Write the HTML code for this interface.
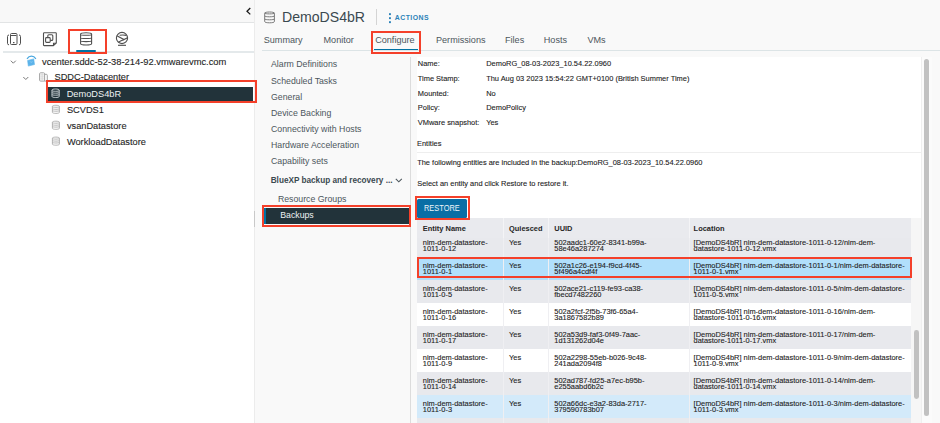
<!DOCTYPE html>
<html><head><meta charset="utf-8"><title>DemoDS4bR - Configure - Backups</title>
<style>
html,body{margin:0;padding:0;width:940px;height:423px;overflow:hidden;background:#fff}
body{position:relative;font-family:"Liberation Sans",sans-serif}
.t{position:absolute;white-space:nowrap}
.r{position:absolute}
</style></head><body>
<div class="r" style="left:0px;top:0px;width:253.5px;height:423px;background:#fff"></div>
<div class="r" style="left:0px;top:0px;width:253.5px;height:22px;background:#f8f8f8"></div>
<div class="r" style="left:0px;top:22px;width:253.5px;height:1px;background:#e2e4e5"></div>
<div class="r" style="left:3px;top:51.2px;width:250.5px;height:1.6px;background:#e4e9eb"></div>
<div class="r" style="left:253.5px;top:0px;width:1.5px;height:423px;background:#ececec"></div>
<div class="r" style="left:253.6px;top:211px;width:1.4px;height:16px;background:#c9c9c9"></div>
<svg class="r" style="left:245px;top:7px" width="8" height="9" viewBox="0 0 8 9"><path d="M5.3 1 L2 4.2 L5.3 7.4" fill="none" stroke="#1a1a1a" stroke-width="1.3"/></svg>
<div class="r" style="left:76px;top:50.2px;width:20px;height:2px;background:#0072a3;border-radius:1px"></div>
<div class="t" style="left:42.00px;top:58px;font-size:9.35px;line-height:9.35px;color:#262626;font-weight:400;-webkit-text-stroke:0.12px #262626">vcenter.sddc-52-38-214-92.vmwarevmc.com</div>
<div class="t" style="left:54.50px;top:73px;font-size:9.25px;line-height:9.25px;color:#262626;font-weight:400;-webkit-text-stroke:0.12px #262626">SDDC-Datacenter</div>
<div class="r" style="left:48.1px;top:86.6px;width:205px;height:14.9px;background:#22333a"></div>
<div class="t" style="left:66.70px;top:90px;font-size:9.25px;line-height:9.25px;color:#eef2f3;font-weight:400;">DemoDS4bR</div>
<div class="t" style="left:66.90px;top:106px;font-size:9.25px;line-height:9.25px;color:#262626;font-weight:400;-webkit-text-stroke:0.12px #262626">SCVDS1</div>
<div class="t" style="left:66.90px;top:122px;font-size:9.25px;line-height:9.25px;color:#262626;font-weight:400;-webkit-text-stroke:0.12px #262626">vsanDatastore</div>
<div class="t" style="left:66.90px;top:138px;font-size:9.25px;line-height:9.25px;color:#262626;font-weight:400;-webkit-text-stroke:0.12px #262626">WorkloadDatastore</div>
<div class="r" style="left:255px;top:0px;width:685px;height:423px;background:#f9f9f9"></div>
<div class="t" style="left:282.00px;top:10px;font-size:14.1px;line-height:14.1px;color:#3b4950;font-weight:400;">DemoDS4bR</div>
<div class="r" style="left:376px;top:9px;width:1px;height:16px;background:#d4d4d4"></div>
<svg class="r" style="left:388px;top:13px" width="4" height="12"><rect x="1" y="0.2" width="1.9" height="1.9" fill="#2b82b8"/><rect x="1" y="4.2" width="1.9" height="1.9" fill="#2b82b8"/><rect x="1" y="8.2" width="1.9" height="1.9" fill="#2b82b8"/></svg>
<div class="t" style="left:394.80px;top:15px;font-size:6.9px;line-height:6.9px;color:#2b82b8;font-weight:700;letter-spacing:0.45px">ACTIONS</div>
<div class="t" style="left:263.70px;top:36px;font-size:9.1px;line-height:9.1px;color:#4c565c;font-weight:400;">Summary</div>
<div class="t" style="left:323.50px;top:36px;font-size:9.1px;line-height:9.1px;color:#4c565c;font-weight:400;">Monitor</div>
<div class="t" style="left:375.20px;top:36px;font-size:9.1px;line-height:9.1px;color:#4c565c;font-weight:400;">Configure</div>
<div class="t" style="left:436.00px;top:36px;font-size:9.1px;line-height:9.1px;color:#4c565c;font-weight:400;">Permissions</div>
<div class="t" style="left:505.00px;top:36px;font-size:9.1px;line-height:9.1px;color:#4c565c;font-weight:400;">Files</div>
<div class="t" style="left:543.80px;top:36px;font-size:9.1px;line-height:9.1px;color:#4c565c;font-weight:400;">Hosts</div>
<div class="t" style="left:587.40px;top:36px;font-size:9.1px;line-height:9.1px;color:#4c565c;font-weight:400;">VMs</div>
<div class="r" style="left:261.5px;top:49.8px;width:678.5px;height:1.2px;background:#dce4e6"></div>
<div class="r" style="left:373.7px;top:48.8px;width:44px;height:1.6px;background:#0072a3"></div>
<div class="t" style="left:271.00px;top:60px;font-size:8.75px;line-height:8.75px;color:#4c565c;font-weight:400;">Alarm Definitions</div>
<div class="t" style="left:271.00px;top:77px;font-size:8.75px;line-height:8.75px;color:#4c565c;font-weight:400;">Scheduled Tasks</div>
<div class="t" style="left:271.00px;top:93px;font-size:8.75px;line-height:8.75px;color:#4c565c;font-weight:400;">General</div>
<div class="t" style="left:271.00px;top:109px;font-size:8.75px;line-height:8.75px;color:#4c565c;font-weight:400;">Device Backing</div>
<div class="t" style="left:271.00px;top:125px;font-size:8.75px;line-height:8.75px;color:#4c565c;font-weight:400;">Connectivity with Hosts</div>
<div class="t" style="left:271.00px;top:141px;font-size:8.75px;line-height:8.75px;color:#4c565c;font-weight:400;">Hardware Acceleration</div>
<div class="t" style="left:271.00px;top:157px;font-size:8.75px;line-height:8.75px;color:#4c565c;font-weight:400;">Capability sets</div>
<div class="t" style="left:270.70px;top:177px;font-size:8.2px;line-height:8.2px;color:#3b4950;font-weight:700;">BlueXP backup and recovery ...</div>
<svg class="r" style="left:395px;top:178px" width="8" height="6"><path d="M0.8 0.8 L3.8 3.8 L6.8 0.8" fill="none" stroke="#4c565c" stroke-width="1.1"/></svg>
<div class="t" style="left:277.90px;top:195px;font-size:8.75px;line-height:8.75px;color:#4c565c;font-weight:400;">Resource Groups</div>
<div class="r" style="left:264px;top:208.4px;width:144.5px;height:15.7px;background:#22333a"></div>
<div class="r" style="left:264px;top:208.4px;width:1.8px;height:15.7px;background:#0072a3"></div>
<div class="t" style="left:280.20px;top:211px;font-size:8.75px;line-height:8.75px;color:#eef2f3;font-weight:400;">Backups</div>
<div class="r" style="left:410px;top:57px;width:1px;height:366px;background:#dcdcdc"></div>
<div class="r" style="left:416.6px;top:56.7px;width:504.8px;height:366.3px;background:#fff"></div>
<div class="t" style="left:417.80px;top:60px;font-size:7.45px;line-height:7.45px;color:#222;font-weight:400;-webkit-text-stroke:0.1px #222">Name:</div>
<div class="t" style="left:486.20px;top:60px;font-size:7.45px;line-height:7.45px;color:#222;font-weight:400;-webkit-text-stroke:0.1px #222">DemoRG_08-03-2023_10.54.22.0960</div>
<div class="t" style="left:417.80px;top:75px;font-size:7.45px;line-height:7.45px;color:#222;font-weight:400;-webkit-text-stroke:0.1px #222">Time Stamp:</div>
<div class="t" style="left:486.20px;top:75px;font-size:7.45px;line-height:7.45px;color:#222;font-weight:400;-webkit-text-stroke:0.1px #222">Thu Aug 03 2023 15:54:22 GMT+0100 (British Summer Time)</div>
<div class="t" style="left:417.80px;top:90px;font-size:7.45px;line-height:7.45px;color:#222;font-weight:400;-webkit-text-stroke:0.1px #222">Mounted:</div>
<div class="t" style="left:486.20px;top:90px;font-size:7.45px;line-height:7.45px;color:#222;font-weight:400;-webkit-text-stroke:0.1px #222">No</div>
<div class="t" style="left:417.80px;top:104px;font-size:7.45px;line-height:7.45px;color:#222;font-weight:400;-webkit-text-stroke:0.1px #222">Policy:</div>
<div class="t" style="left:486.20px;top:104px;font-size:7.45px;line-height:7.45px;color:#222;font-weight:400;-webkit-text-stroke:0.1px #222">DemoPolicy</div>
<div class="t" style="left:417.80px;top:119px;font-size:7.45px;line-height:7.45px;color:#222;font-weight:400;-webkit-text-stroke:0.1px #222">VMware snapshot:</div>
<div class="t" style="left:486.20px;top:119px;font-size:7.45px;line-height:7.45px;color:#222;font-weight:400;-webkit-text-stroke:0.1px #222">Yes</div>
<div class="t" style="left:417.00px;top:140px;font-size:7.45px;line-height:7.45px;color:#222;font-weight:400;-webkit-text-stroke:0.1px #222">Entities</div>
<div class="r" style="left:416.6px;top:152.3px;width:504.8px;height:1px;background:#eeeeee"></div>
<div class="t" style="left:417.20px;top:159px;font-size:7.45px;line-height:7.45px;color:#222;font-weight:400;-webkit-text-stroke:0.1px #222">The following entities are included in the backup:DemoRG_08-03-2023_10.54.22.0960</div>
<div class="t" style="left:417.20px;top:180px;font-size:7.45px;line-height:7.45px;color:#222;font-weight:400;-webkit-text-stroke:0.1px #222">Select an entity and click Restore to restore it.</div>
<div class="r" style="left:416.7px;top:198.8px;width:50px;height:18.8px;background:#096ea5;border-radius:1.5px"></div>
<div class="t" style="left:423.90px;top:205px;font-size:8.2px;line-height:8.2px;color:#eef5f9;font-weight:400;transform:scaleX(0.905);transform-origin:0 0">RESTORE</div>
<div class="r" style="left:0;top:238.3px;width:940px;height:184.7px;overflow:hidden"><div class="r" style="left:0;top:-238.3px;width:940px;height:700px">
<div class="r" style="left:417.2px;top:233.5px;width:494.2px;height:23.0px;background:#e8e9ed"></div>
<div class="r" style="left:502.8px;top:233.5px;width:1px;height:23.0px;background:#efeff2"></div>
<div class="r" style="left:548.0px;top:233.5px;width:1px;height:23.0px;background:#efeff2"></div>
<div class="r" style="left:688.5px;top:233.5px;width:1px;height:23.0px;background:#efeff2"></div>
<div class="t" style="left:422.80px;top:240px;font-size:7.45px;line-height:6.2px;color:#222;font-weight:400;-webkit-text-stroke:0.1px #222">nim-dem-datastore-<br>1011-0-12</div>
<div class="t" style="left:509.00px;top:240px;font-size:7.45px;line-height:6.2px;color:#222;font-weight:400;-webkit-text-stroke:0.1px #222">Yes</div>
<div class="t" style="left:554.30px;top:240px;font-size:7.45px;line-height:6.2px;color:#222;font-weight:400;-webkit-text-stroke:0.1px #222">502aadc1-60e2-8341-b99a-<br>58e46a287274</div>
<div class="t" style="left:693.60px;top:240px;font-size:7.45px;line-height:6.2px;color:#222;font-weight:400;-webkit-text-stroke:0.1px #222">[DemoDS4bR] nim-dem-datastore-1011-0-12/nim-dem-<br>datastore-1011-0-12.vmx</div>
<div class="r" style="left:417.2px;top:256.5px;width:494.2px;height:23.0px;background:#b1dffb"></div>
<div class="r" style="left:502.8px;top:256.5px;width:1px;height:23.0px;background:#efeff2"></div>
<div class="r" style="left:548.0px;top:256.5px;width:1px;height:23.0px;background:#efeff2"></div>
<div class="r" style="left:688.5px;top:256.5px;width:1px;height:23.0px;background:#efeff2"></div>
<div class="t" style="left:422.80px;top:263px;font-size:7.45px;line-height:6.2px;color:#222;font-weight:400;-webkit-text-stroke:0.1px #222">nim-dem-datastore-<br>1011-0-1</div>
<div class="t" style="left:509.00px;top:263px;font-size:7.45px;line-height:6.2px;color:#222;font-weight:400;-webkit-text-stroke:0.1px #222">Yes</div>
<div class="t" style="left:554.30px;top:263px;font-size:7.45px;line-height:6.2px;color:#222;font-weight:400;-webkit-text-stroke:0.1px #222">502a1c26-e194-f9cd-4f45-<br>5f496a4cdf4f</div>
<div class="t" style="left:693.60px;top:263px;font-size:7.45px;line-height:6.2px;color:#222;font-weight:400;-webkit-text-stroke:0.1px #222">[DemoDS4bR] nim-dem-datastore-1011-0-1/nim-dem-datastore-<br>1011-0-1.vmx</div>
<div class="r" style="left:417.2px;top:279.5px;width:494.2px;height:23.0px;background:#e8e9ed"></div>
<div class="r" style="left:502.8px;top:279.5px;width:1px;height:23.0px;background:#efeff2"></div>
<div class="r" style="left:548.0px;top:279.5px;width:1px;height:23.0px;background:#efeff2"></div>
<div class="r" style="left:688.5px;top:279.5px;width:1px;height:23.0px;background:#efeff2"></div>
<div class="t" style="left:422.80px;top:286px;font-size:7.45px;line-height:6.2px;color:#222;font-weight:400;-webkit-text-stroke:0.1px #222">nim-dem-datastore-<br>1011-0-5</div>
<div class="t" style="left:509.00px;top:286px;font-size:7.45px;line-height:6.2px;color:#222;font-weight:400;-webkit-text-stroke:0.1px #222">Yes</div>
<div class="t" style="left:554.30px;top:286px;font-size:7.45px;line-height:6.2px;color:#222;font-weight:400;-webkit-text-stroke:0.1px #222">502ace21-c119-fe93-ca38-<br>fbecd7482260</div>
<div class="t" style="left:693.60px;top:286px;font-size:7.45px;line-height:6.2px;color:#222;font-weight:400;-webkit-text-stroke:0.1px #222">[DemoDS4bR] nim-dem-datastore-1011-0-5/nim-dem-datastore-<br>1011-0-5.vmx</div>
<div class="r" style="left:417.2px;top:302.5px;width:494.2px;height:23.0px;background:#ffffff"></div>
<div class="r" style="left:502.8px;top:302.5px;width:1px;height:23.0px;background:#efeff2"></div>
<div class="r" style="left:548.0px;top:302.5px;width:1px;height:23.0px;background:#efeff2"></div>
<div class="r" style="left:688.5px;top:302.5px;width:1px;height:23.0px;background:#efeff2"></div>
<div class="t" style="left:422.80px;top:309px;font-size:7.45px;line-height:6.2px;color:#222;font-weight:400;-webkit-text-stroke:0.1px #222">nim-dem-datastore-<br>1011-0-16</div>
<div class="t" style="left:509.00px;top:309px;font-size:7.45px;line-height:6.2px;color:#222;font-weight:400;-webkit-text-stroke:0.1px #222">Yes</div>
<div class="t" style="left:554.30px;top:309px;font-size:7.45px;line-height:6.2px;color:#222;font-weight:400;-webkit-text-stroke:0.1px #222">502a2fcf-2f5b-73f6-65a4-<br>3a1867582b89</div>
<div class="t" style="left:693.60px;top:309px;font-size:7.45px;line-height:6.2px;color:#222;font-weight:400;-webkit-text-stroke:0.1px #222">[DemoDS4bR] nim-dem-datastore-1011-0-16/nim-dem-<br>datastore-1011-0-16.vmx</div>
<div class="r" style="left:417.2px;top:325.5px;width:494.2px;height:23.0px;background:#e8e9ed"></div>
<div class="r" style="left:502.8px;top:325.5px;width:1px;height:23.0px;background:#efeff2"></div>
<div class="r" style="left:548.0px;top:325.5px;width:1px;height:23.0px;background:#efeff2"></div>
<div class="r" style="left:688.5px;top:325.5px;width:1px;height:23.0px;background:#efeff2"></div>
<div class="t" style="left:422.80px;top:332px;font-size:7.45px;line-height:6.2px;color:#222;font-weight:400;-webkit-text-stroke:0.1px #222">nim-dem-datastore-<br>1011-0-17</div>
<div class="t" style="left:509.00px;top:332px;font-size:7.45px;line-height:6.2px;color:#222;font-weight:400;-webkit-text-stroke:0.1px #222">Yes</div>
<div class="t" style="left:554.30px;top:332px;font-size:7.45px;line-height:6.2px;color:#222;font-weight:400;-webkit-text-stroke:0.1px #222">502a53d9-faf3-0f49-7aac-<br>1d131262d04e</div>
<div class="t" style="left:693.60px;top:332px;font-size:7.45px;line-height:6.2px;color:#222;font-weight:400;-webkit-text-stroke:0.1px #222">[DemoDS4bR] nim-dem-datastore-1011-0-17/nim-dem-<br>datastore-1011-0-17.vmx</div>
<div class="r" style="left:417.2px;top:348.5px;width:494.2px;height:23.0px;background:#ffffff"></div>
<div class="r" style="left:502.8px;top:348.5px;width:1px;height:23.0px;background:#efeff2"></div>
<div class="r" style="left:548.0px;top:348.5px;width:1px;height:23.0px;background:#efeff2"></div>
<div class="r" style="left:688.5px;top:348.5px;width:1px;height:23.0px;background:#efeff2"></div>
<div class="t" style="left:422.80px;top:355px;font-size:7.45px;line-height:6.2px;color:#222;font-weight:400;-webkit-text-stroke:0.1px #222">nim-dem-datastore-<br>1011-0-9</div>
<div class="t" style="left:509.00px;top:355px;font-size:7.45px;line-height:6.2px;color:#222;font-weight:400;-webkit-text-stroke:0.1px #222">Yes</div>
<div class="t" style="left:554.30px;top:355px;font-size:7.45px;line-height:6.2px;color:#222;font-weight:400;-webkit-text-stroke:0.1px #222">502a2298-55eb-b026-9c48-<br>241ada2094f8</div>
<div class="t" style="left:693.60px;top:355px;font-size:7.45px;line-height:6.2px;color:#222;font-weight:400;-webkit-text-stroke:0.1px #222">[DemoDS4bR] nim-dem-datastore-1011-0-9/nim-dem-datastore-<br>1011-0-9.vmx</div>
<div class="r" style="left:417.2px;top:371.5px;width:494.2px;height:23.0px;background:#e8e9ed"></div>
<div class="r" style="left:502.8px;top:371.5px;width:1px;height:23.0px;background:#efeff2"></div>
<div class="r" style="left:548.0px;top:371.5px;width:1px;height:23.0px;background:#efeff2"></div>
<div class="r" style="left:688.5px;top:371.5px;width:1px;height:23.0px;background:#efeff2"></div>
<div class="t" style="left:422.80px;top:378px;font-size:7.45px;line-height:6.2px;color:#222;font-weight:400;-webkit-text-stroke:0.1px #222">nim-dem-datastore-<br>1011-0-14</div>
<div class="t" style="left:509.00px;top:378px;font-size:7.45px;line-height:6.2px;color:#222;font-weight:400;-webkit-text-stroke:0.1px #222">Yes</div>
<div class="t" style="left:554.30px;top:378px;font-size:7.45px;line-height:6.2px;color:#222;font-weight:400;-webkit-text-stroke:0.1px #222">502ad787-fd25-a7ec-b95b-<br>e255aabd6b2c</div>
<div class="t" style="left:693.60px;top:378px;font-size:7.45px;line-height:6.2px;color:#222;font-weight:400;-webkit-text-stroke:0.1px #222">[DemoDS4bR] nim-dem-datastore-1011-0-14/nim-dem-<br>datastore-1011-0-14.vmx</div>
<div class="r" style="left:417.2px;top:394.5px;width:494.2px;height:23.0px;background:#d3eafa"></div>
<div class="r" style="left:502.8px;top:394.5px;width:1px;height:23.0px;background:#efeff2"></div>
<div class="r" style="left:548.0px;top:394.5px;width:1px;height:23.0px;background:#efeff2"></div>
<div class="r" style="left:688.5px;top:394.5px;width:1px;height:23.0px;background:#efeff2"></div>
<div class="t" style="left:422.80px;top:401px;font-size:7.45px;line-height:6.2px;color:#222;font-weight:400;-webkit-text-stroke:0.1px #222">nim-dem-datastore-<br>1011-0-3</div>
<div class="t" style="left:509.00px;top:401px;font-size:7.45px;line-height:6.2px;color:#222;font-weight:400;-webkit-text-stroke:0.1px #222">Yes</div>
<div class="t" style="left:554.30px;top:401px;font-size:7.45px;line-height:6.2px;color:#222;font-weight:400;-webkit-text-stroke:0.1px #222">502a66dc-e3a2-83da-2717-<br>379590783b07</div>
<div class="t" style="left:693.60px;top:401px;font-size:7.45px;line-height:6.2px;color:#222;font-weight:400;-webkit-text-stroke:0.1px #222">[DemoDS4bR] nim-dem-datastore-1011-0-3/nim-dem-datastore-<br>1011-0-3.vmx</div>
<div class="r" style="left:417.2px;top:417.5px;width:494.2px;height:23.0px;background:#e8e9ed"></div>
<div class="r" style="left:502.8px;top:417.5px;width:1px;height:23.0px;background:#efeff2"></div>
<div class="r" style="left:548.0px;top:417.5px;width:1px;height:23.0px;background:#efeff2"></div>
<div class="r" style="left:688.5px;top:417.5px;width:1px;height:23.0px;background:#efeff2"></div>
<div class="t" style="left:422.80px;top:424px;font-size:7.45px;line-height:6.2px;color:#222;font-weight:400;-webkit-text-stroke:0.1px #222">nim-dem-datastore-<br>1011-0-2</div>
<div class="t" style="left:509.00px;top:424px;font-size:7.45px;line-height:6.2px;color:#222;font-weight:400;-webkit-text-stroke:0.1px #222">Yes</div>
<div class="t" style="left:554.30px;top:424px;font-size:7.45px;line-height:6.2px;color:#222;font-weight:400;-webkit-text-stroke:0.1px #222">502a0000-0000-0000-0000-<br>000000000000</div>
<div class="t" style="left:693.60px;top:424px;font-size:7.45px;line-height:6.2px;color:#222;font-weight:400;-webkit-text-stroke:0.1px #222">[DemoDS4bR] nim-dem-datastore-1011-0-2/nim-dem-datastore-<br>1011-0-2.vmx</div>
</div></div>
<div class="r" style="left:417.2px;top:217.9px;width:494.2px;height:20.4px;background:#e9eaee"></div>
<div class="r" style="left:502.8px;top:217.9px;width:1px;height:20.4px;background:#f4f4f6"></div>
<div class="r" style="left:548.0px;top:217.9px;width:1px;height:20.4px;background:#f4f4f6"></div>
<div class="r" style="left:688.5px;top:217.9px;width:1px;height:20.4px;background:#f4f4f6"></div>
<div class="t" style="left:422.80px;top:225px;font-size:7.45px;line-height:7.45px;color:#262626;font-weight:700;">Entity Name</div>
<div class="t" style="left:509.00px;top:225px;font-size:7.45px;line-height:7.45px;color:#262626;font-weight:700;">Quiesced</div>
<div class="t" style="left:554.30px;top:225px;font-size:7.45px;line-height:7.45px;color:#262626;font-weight:700;">UUID</div>
<div class="t" style="left:693.60px;top:225px;font-size:7.45px;line-height:7.45px;color:#262626;font-weight:700;">Location</div>
<div class="r" style="left:911.4px;top:217.9px;width:10px;height:205.1px;background:#f6f6f6"></div>
<div class="r" style="left:914.2px;top:330.3px;width:4.8px;height:69px;background:#c1c1c1;border-radius:2.4px"></div>
<div class="r" style="left:921.4px;top:56.7px;width:10.6px;height:366.3px;background:#fbfbfb"></div>
<div class="r" style="left:921.3px;top:56.7px;width:1px;height:366.3px;background:#efefef"></div>
<div class="r" style="left:923.8px;top:58.5px;width:5px;height:357.3px;background:#c1c1c1;border-radius:2.5px"></div>
<svg class="r" style="left:0;top:0" width="940" height="423" viewBox="0 0 940 423"><g fill="none" stroke="#505050" stroke-width="1"><path d="M9 35 Q7.5 35 7.5 36.5 V43.3 Q7.5 44.8 9 44.8"/><path d="M19 35 Q20.5 35 20.5 36.5 V43.3 Q20.5 44.8 19 44.8"/><rect x="10.5" y="33.5" width="6.5" height="11" rx="1"/><path d="M11 35.5 H16.5"/></g><rect x="13" y="42" width="1.5" height="1.2" fill="#505050"/><g fill="none" stroke="#505050" stroke-width="1.1"><path d="M44.3 32.8 H55.7 Q56.3 32.8 56.3 33.4 V43 L53.3 45.6 H44.1 Q43.5 45.6 43.5 45 V33.6 Q43.5 32.8 44.3 32.8 Z"/><path d="M53.5 45.3 V43.3 H56"/><rect x="47.8" y="34.8" width="5" height="5.6" rx="1"/></g><rect x="45.6" y="37.6" width="4.6" height="4.8" rx="0.9" fill="#fff" stroke="#505050" stroke-width="1.1"/><path d="M80.6 34.0 C80.6 32.4 91.6 32.4 91.6 34.0 V43.8 C91.6 45.4 80.6 45.4 80.6 43.8 Z M80.6 34.400000000000006 C80.6 35.466666666666676 91.6 35.466666666666676 91.6 34.400000000000006 M80.6 37.7 C80.6 38.76666666666667 91.6 38.76666666666667 91.6 37.7 M80.6 40.800000000000004 C80.6 41.866666666666674 91.6 41.866666666666674 91.6 40.800000000000004" fill="none" stroke="#505050" stroke-width="1.1"/><g fill="none" stroke="#505050" stroke-width="1.15"><circle cx="122" cy="38" r="5.6"/><path d="M119.6 35.3 Q123 34.6 126.3 35.4"/><path d="M117.3 35.9 L124 39.6 L127.5 37.8"/><path d="M118.2 42.4 Q121 40.4 124 39.6"/><path d="M118 45.3 H126"/></g><g fill="none" stroke="#7a7a7a" stroke-width="1"><path d="M10.8 60.7 L13.3 63.2 L15.8 60.7"/><path d="M23.3 77 L25.8 79.5 L28.3 77"/></g><path d="M27 58.9 C29.3 55.3 33.6 55.3 35.9 58.9" fill="none" stroke="#4aa8e0" stroke-width="1.2"/><path d="M27.6 60.5 L33.7 58.9 L34.5 64.5 L28.3 66.1 Z" fill="#5cb3ea" stroke="#5cb3ea" stroke-width="0.6" stroke-linejoin="round"/><path d="M29.6 61.3 L31.6 62.6 L32.4 61" fill="none" stroke="#9fd3f5" stroke-width="0.5"/><g fill="none" stroke="#a3a3a3" stroke-width="1"><path d="M44.6 81.1 H40.6 Q39.6 81.1 39.6 80.1 V73.8 Q39.6 72.8 40.6 72.8 H43.6 Q44.6 72.8 44.6 73.8 Z"/><path d="M44.6 74.3 H46.3 Q47.3 74.3 47.3 75.3 V81.1 H44.6"/></g><g fill="none" stroke="#cfcfcf" stroke-width="0.8"><path d="M40.2 74.9 H44 M40.2 76.9 H44 M40.2 78.9 H44 M42.1 73.4 V80.6"/></g><path d="M52.0 90.0 C52.0 88.66666666666667 59.2 88.66666666666667 59.2 90.0 V96.5 C59.2 97.83333333333333 52.0 97.83333333333333 52.0 96.5 Z M52.0 90.6 C52.0 91.53333333333333 59.2 91.53333333333333 59.2 90.6 M52.0 92.5 C52.0 93.43333333333334 59.2 93.43333333333334 59.2 92.5 M52.0 94.5 C52.0 95.43333333333334 59.2 95.43333333333334 59.2 94.5" fill="none" stroke="#c3cbcf" stroke-width="1"/><path d="M52.4 106.3 C52.4 104.96666666666667 59.4 104.96666666666667 59.4 106.3 V112.39999999999999 C59.4 113.73333333333332 52.4 113.73333333333332 52.4 112.39999999999999 Z M52.4 106.7 C52.4 107.5 59.4 107.5 59.4 106.7 M52.4 108.7 C52.4 109.5 59.4 109.5 59.4 108.7 M52.4 110.60000000000001 C52.4 111.4 59.4 111.4 59.4 110.60000000000001" fill="none" stroke="#ababab" stroke-width="0.9"/><path d="M52.4 122.2 C52.4 120.86666666666667 59.4 120.86666666666667 59.4 122.2 V128.3 C59.4 129.63333333333335 52.4 129.63333333333335 52.4 128.3 Z M52.4 122.60000000000001 C52.4 123.4 59.4 123.4 59.4 122.60000000000001 M52.4 124.60000000000001 C52.4 125.4 59.4 125.4 59.4 124.60000000000001 M52.4 126.50000000000001 C52.4 127.30000000000001 59.4 127.30000000000001 59.4 126.50000000000001" fill="none" stroke="#ababab" stroke-width="0.9"/><path d="M52.4 138.1 C52.4 136.76666666666665 59.4 136.76666666666665 59.4 138.1 V144.2 C59.4 145.53333333333333 52.4 145.53333333333333 52.4 144.2 Z M52.4 138.5 C52.4 139.3 59.4 139.3 59.4 138.5 M52.4 140.5 C52.4 141.3 59.4 141.3 59.4 140.5 M52.4 142.4 C52.4 143.20000000000002 59.4 143.20000000000002 59.4 142.4" fill="none" stroke="#ababab" stroke-width="0.9"/><path d="M264.7 13.2 C264.7 11.6 274.4 11.6 274.4 13.2 V21.6 C274.4 23.200000000000003 264.7 23.200000000000003 264.7 21.6 Z M264.7 13.0 C264.7 14.2 274.4 14.2 274.4 13.0 M264.7 15.9 C264.7 17.1 274.4 17.1 274.4 15.9 M264.7 18.900000000000002 C264.7 20.1 274.4 20.1 274.4 18.900000000000002" fill="none" stroke="#7a7a7a" stroke-width="1"/></svg>
<div class="r" style="left:67.6px;top:29.1px;width:39.2px;height:25px;border:2px solid #f4402a;box-sizing:border-box"></div>
<div class="r" style="left:46px;top:79.9px;width:210.5px;height:23.4px;border:2px solid #f4402a;box-sizing:border-box"></div>
<div class="r" style="left:371px;top:30.8px;width:49.6px;height:22.8px;border:2px solid #f4402a;box-sizing:border-box"></div>
<div class="r" style="left:262px;top:205.3px;width:149px;height:21.5px;border:2px solid #f4402a;box-sizing:border-box"></div>
<div class="r" style="left:414.5px;top:196.4px;width:55.3px;height:23.2px;border:2px solid #f4402a;box-sizing:border-box"></div>
<div class="r" style="left:417px;top:257.4px;width:494.6px;height:21px;border:2px solid #f4402a;box-sizing:border-box"></div>
</body></html>
